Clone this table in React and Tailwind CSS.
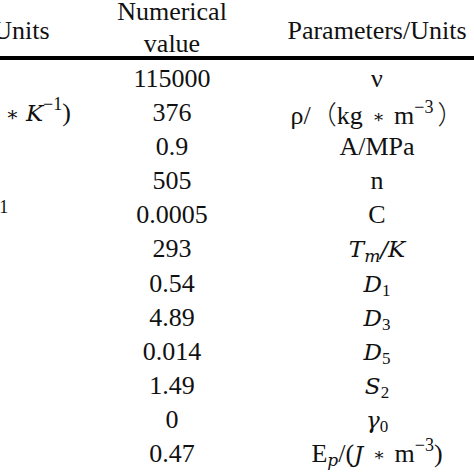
import React from 'react';

const M = ({ children }) => (
  <span className="italic [font-family:'DejaVu_Serif',serif] text-[23px]">{children}</span>
);

const Sup = ({ children }) => <sup className="text-[18px] -top-[0.6em] not-italic">{children}</sup>;
const Sub = ({ children }) => <sub className="text-[17px] not-italic">{children}</sub>;
const Ast = () => (
  <span className="[font-family:'DejaVu_Serif',serif] text-[18px] relative -top-[1px] mx-[3px]">∗</span>
);
const Cjk = ({ children }) => (
  <span className="[font-family:'Noto_Sans_CJK_SC',sans-serif] font-light">{children}</span>
);

const rows = [
  { a: <>E/GPa</>, v: '115000', p: <>ν</> },
  {
    a: (
      <>
        <span className="inline-block w-[24px]" />
        C/(<M>J</M> ∗ <M>kg</M><Sup>−1</Sup> <span className="[font-family:'DejaVu_Serif',serif] text-[20px]">∗</span> <M>K</M>
        <Sup>−1</Sup>)
      </>
    ),
    v: '376',
    p: (
      <>
        ρ/<Cjk>（</Cjk>kg <Ast /> m<Sup>−3</Sup>
        <span className="inline-block w-[4px]" />
        <Cjk>）</Cjk>
      </>
    ),
  },
  { a: <>B/MPa</>, v: '0.9', p: <>A/MPa</> },
  { a: <>m</>, v: '505', p: <>n</> },
  {
    a: (
      <>
        <span className="inline-block w-[34px]" />
        ε̇<Sub>0</Sub>/ s<Sup>−1</Sup>
      </>
    ),
    v: '0.0005',
    p: <>C</>,
  },
  {
    a: <>T</>,
    v: '293',
    p: (
      <M>
        T<sub className="text-[17px]">m</sub>/K
      </M>
    ),
  },
  { a: <>D</>, v: '0.54', p: <><M>D</M><Sub>1</Sub></> },
  { a: <>D</>, v: '4.89', p: <><M>D</M><Sub>3</Sub></> },
  { a: <>D</>, v: '0.014', p: <><M>D</M><Sub>5</Sub></> },
  { a: <>S</>, v: '1.49', p: <><M>S</M><Sub>2</Sub></> },
  { a: <>P</>, v: '0', p: <><M>γ</M><Sub>0</Sub></> },
  {
    a: <>Q</>,
    v: '0.47',
    p: (
      <>
        E<sub className="text-[17px] italic [font-family:'DejaVu_Serif',serif]">p</sub>/(<M>J</M> <Ast /> m<Sup>−3</Sup>)
      </>
    ),
  },
];

export default function App() {
  return (
    <div className="w-[474px] h-[474px] overflow-hidden bg-white text-[#111] [font-family:'Liberation_Serif',serif] text-[26px]">
      <div className="-mt-[4px] -ml-[150px] w-[680px]">
        <div className="grid grid-cols-[220px_204px_206px_50px] h-[64px] border-b-[4px] border-black items-center">
          <div className="text-center leading-[32px] pt-[6px]">Parameters/Units</div>
          <div className="text-center leading-[32px]">
            Numerical
            <br />
            value
          </div>
          <div className="text-center leading-[32px] pt-[6px]">Parameters/Units</div>
          <div />
        </div>
        {rows.map((r, i) => (
          <div key={i} className="grid grid-cols-[220px_204px_206px_50px] h-[34.1px] leading-[38px]">
            <div className="text-center whitespace-nowrap">{r.a}</div>
            <div className="text-center">{r.v}</div>
            <div className="text-center whitespace-nowrap">{r.p}</div>
            <div />
          </div>
        ))}
      </div>
    </div>
  );
}
